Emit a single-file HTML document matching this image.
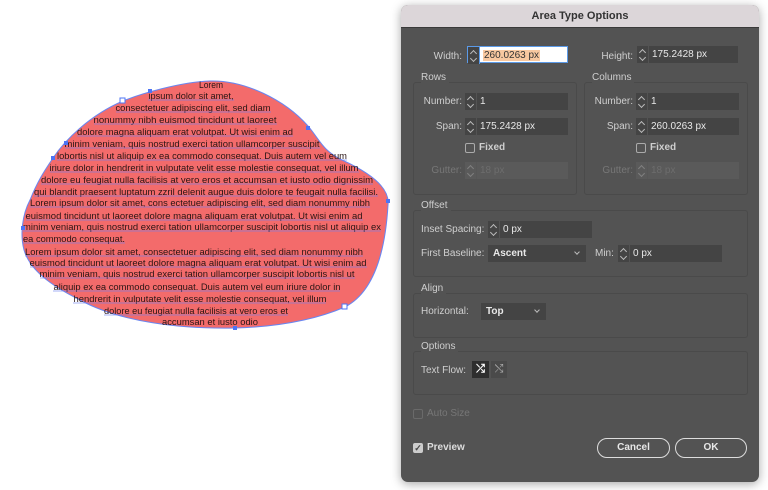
<!DOCTYPE html>
<html><head><meta charset="utf-8"><style>
*{margin:0;padding:0;box-sizing:border-box}
body{width:768px;height:490px;background:#fff;position:relative;overflow:hidden;font-family:"Liberation Sans",sans-serif}
.dlg{position:absolute;left:401px;top:5px;width:358px;height:477px;background:#535353;border-radius:7px;box-shadow:0 2px 10px rgba(0,0,0,.35);overflow:hidden}
.tb{position:absolute;left:0;top:0;width:358px;height:23px;background:#dcd6d9;border-bottom:1px solid #3a3a3a;text-align:center;font-weight:bold;font-size:11px;color:#333;line-height:23px}
.a{position:absolute}
.l{position:absolute;font-size:10px;color:#cfcfcf;white-space:nowrap;line-height:12px}
.dis{color:#777}
.f{position:absolute;height:17px;background:#444;font-size:10px;color:#e8e8e8;line-height:17px;padding-left:15px}
.f .sp{position:absolute;left:0;top:0;width:12px;height:17px;border-right:1px solid #535353;}
.f .sp:before{content:"";position:absolute;left:3px;top:4px;width:4px;height:4px;border-left:1px solid #bbb;border-top:1px solid #bbb;transform:rotate(45deg)}
.f .sp:after{content:"";position:absolute;left:3px;top:9px;width:4px;height:4px;border-right:1px solid #bbb;border-bottom:1px solid #bbb;transform:rotate(45deg)}
.g{position:absolute;border:1px solid #4a4a4a;border-radius:3px}
.dd{position:absolute;height:17px;background:#444;font-size:10px;color:#e8e8e8;line-height:17px;padding-left:5px;font-weight:bold}
.dd:after{content:"";position:absolute;right:7px;top:5px;width:3px;height:3px;border-right:1px solid #bbb;border-bottom:1px solid #bbb;transform:rotate(45deg)}
.cb{position:absolute;width:10px;height:10px;border:1px solid #aaa;border-radius:2px}
.btn{position:absolute;height:20px;border:1.5px solid #ddd;border-radius:10px;color:#e8e8e8;font-size:10px;font-weight:bold;text-align:center;line-height:17px}
</style></head><body>
<svg class="a" style="left:0;top:0" width="400" height="340">
<path d="M210,81 C245,80 285,100 308,126 C320,140 322,150 342,160 C375,175 390,190 388,205 C386,240 378,290 345,307 C310,322 270,327 235,328 C180,329 120,322 80,300 C50,285 30,270 24,250 C20,235 22,215 30,200 C38,180 45,170 53,158 C65,140 90,115 123,101 C140,94 180,82 210,81 Z" fill="#f36b6b" stroke="#6a86f0" stroke-width="1"/>
<g fill="#2a1515" font-family="Liberation Sans,sans-serif" font-size="9" text-anchor="middle">
<text x="211" y="88" textLength="24" lengthAdjust="spacingAndGlyphs">Lorem</text>
<text x="191" y="99" textLength="85" lengthAdjust="spacingAndGlyphs">ipsum dolor sit amet,</text>
<text x="193" y="111" textLength="155" lengthAdjust="spacingAndGlyphs">consectetuer adipiscing elit, sed diam</text>
<text x="185" y="123" textLength="183" lengthAdjust="spacingAndGlyphs">nonummy nibh euismod tincidunt ut laoreet</text>
<text x="185" y="135" textLength="216" lengthAdjust="spacingAndGlyphs">dolore magna aliquam erat volutpat. Ut wisi enim ad</text>
<text x="192" y="147" textLength="255" lengthAdjust="spacingAndGlyphs">minim veniam, quis nostrud exerci tation ullamcorper suscipit</text>
<text x="202" y="159" textLength="290" lengthAdjust="spacingAndGlyphs">lobortis nisl ut aliquip ex ea commodo consequat. Duis autem vel eum</text>
<text x="204" y="171" textLength="309" lengthAdjust="spacingAndGlyphs">iriure dolor in hendrerit in vulputate velit esse molestie consequat, vel illum</text>
<text x="207" y="183" textLength="332" lengthAdjust="spacingAndGlyphs">dolore eu feugiat nulla facilisis at vero eros et accumsan et iusto odio dignissim</text>
<text x="206" y="195" textLength="344" lengthAdjust="spacingAndGlyphs">qui blandit praesent luptatum zzril delenit augue duis dolore te feugait nulla facilisi.</text>
<text x="200" y="206" textLength="340" lengthAdjust="spacingAndGlyphs">Lorem ipsum dolor sit amet, cons ectetuer adipiscing elit, sed diam nonummy nibh</text>
<text x="194" y="219" textLength="337" lengthAdjust="spacingAndGlyphs">euismod tincidunt ut laoreet dolore magna aliquam erat volutpat. Ut wisi enim ad</text>
<text x="202" y="230" textLength="358" lengthAdjust="spacingAndGlyphs">minim veniam, quis nostrud exerci tation ullamcorper suscipit lobortis nisl ut aliquip ex</text>
<text x="23" y="242" text-anchor="start" textLength="102" lengthAdjust="spacingAndGlyphs">ea commodo consequat.</text>
<text x="194" y="255" textLength="338" lengthAdjust="spacingAndGlyphs">Lorem ipsum dolor sit amet, consectetuer adipiscing elit, sed diam nonummy nibh</text>
<text x="198" y="266" textLength="337" lengthAdjust="spacingAndGlyphs">euismod tincidunt ut laoreet dolore magna aliquam erat volutpat. Ut wisi enim ad</text>
<text x="197" y="277" textLength="315" lengthAdjust="spacingAndGlyphs">minim veniam, quis nostrud exerci tation ullamcorper suscipit lobortis nisl ut</text>
<text x="197" y="290" textLength="287" lengthAdjust="spacingAndGlyphs">aliquip ex ea commodo consequat. Duis autem vel eum iriure dolor in</text>
<text x="200" y="302" textLength="253" lengthAdjust="spacingAndGlyphs">hendrerit in vulputate velit esse molestie consequat, vel illum</text>
<text x="196" y="314" textLength="184" lengthAdjust="spacingAndGlyphs">dolore eu feugiat nulla facilisis at vero eros et</text>
<text x="210" y="325" textLength="96" lengthAdjust="spacingAndGlyphs">accumsan et iusto odio</text>
</g>
<g stroke="#6a7ff0" stroke-width="0.8" opacity="0.8">
<line x1="148" y1="100" x2="234" y2="100"/><line x1="116" y1="112" x2="271" y2="112"/><line x1="94" y1="124" x2="277" y2="124"/><line x1="77" y1="136" x2="293" y2="136"/><line x1="65" y1="148" x2="320" y2="148"/><line x1="57" y1="160" x2="347" y2="160"/><line x1="50" y1="172" x2="359" y2="172"/><line x1="41" y1="184" x2="373" y2="184"/><line x1="34" y1="196" x2="378" y2="196"/><line x1="30" y1="207" x2="370" y2="207"/><line x1="26" y1="220" x2="363" y2="220"/><line x1="23" y1="231" x2="381" y2="231"/><line x1="23" y1="243" x2="125" y2="243"/><line x1="25" y1="256" x2="363" y2="256"/><line x1="30" y1="267" x2="367" y2="267"/><line x1="40" y1="278" x2="355" y2="278"/><line x1="53" y1="291" x2="340" y2="291"/><line x1="73" y1="303" x2="326" y2="303"/><line x1="104" y1="315" x2="288" y2="315"/>
</g>
<g fill="#4d74f5"><rect x="148" y="89" width="4" height="4"/><rect x="306" y="126" width="4" height="4"/><rect x="386" y="199" width="4" height="4"/><rect x="51" y="156" width="4" height="4"/><rect x="64" y="141" width="4" height="4"/><rect x="21" y="226" width="4" height="4"/><rect x="233" y="326" width="4" height="4"/></g>
<g fill="#fff" stroke="#4d74f5"><rect x="120" y="98" width="5" height="5"/><rect x="342" y="304" width="5" height="5"/></g>
</svg>
<div class="dlg">
<div class="tb">Area Type Options</div>
<div class="l" style="right:297px;top:46px">Width:</div>
<div class="f" style="left:66px;top:41px;width:101px;border:1px solid #5b9ae8;background:#fff;color:#333"><span class="sp" style="border-color:#5b9ae8;background:#444"></span><span style="background:#f8c8a0;padding:0 1px">260.0263 px</span></div>
<div class="l" style="right:126px;top:46px">Height:</div>
<div class="f" style="left:236px;top:41px;width:101px"><span class="sp"></span>175.2428 px</div>
<div class="g" style="left:12px;top:77px;width:164px;height:113px"></div>
<div class="g" style="left:183px;top:77px;width:164px;height:113px"></div>
<div class="l" style="left:20px;top:67px;background:#535353;padding-right:3px">Rows</div>
<div class="l" style="left:191px;top:67px;background:#535353;padding-right:3px">Columns</div>
<div class="l" style="right:297px;top:91px">Number:</div>
<div class="f" style="left:64px;top:88px;width:103px"><span class="sp"></span>1</div>
<div class="l" style="right:126px;top:91px">Number:</div>
<div class="f" style="left:235px;top:88px;width:103px"><span class="sp"></span>1</div>
<div class="l" style="right:297px;top:116px">Span:</div>
<div class="f" style="left:64px;top:113px;width:103px"><span class="sp"></span>175.2428 px</div>
<div class="l" style="right:126px;top:116px">Span:</div>
<div class="f" style="left:235px;top:113px;width:103px"><span class="sp"></span>260.0263 px</div>
<div class="cb" style="left:64px;top:138px"></div><div class="l" style="left:78px;top:137px;font-weight:bold">Fixed</div>
<div class="cb" style="left:235px;top:138px"></div><div class="l" style="left:249px;top:137px;font-weight:bold">Fixed</div>
<div class="l dis" style="right:297px;top:160px">Gutter:</div>
<div class="f" style="left:64px;top:157px;width:103px;background:#5a5a5a;color:#6d6d6d"><span class="sp" style="opacity:.4"></span>18 px</div>
<div class="l dis" style="right:126px;top:160px">Gutter:</div>
<div class="f" style="left:235px;top:157px;width:103px;background:#5a5a5a;color:#6d6d6d"><span class="sp" style="opacity:.4"></span>18 px</div>
<div class="g" style="left:12px;top:205px;width:335px;height:67px"></div>
<div class="l" style="left:20px;top:195px;background:#535353;padding-right:3px">Offset</div>
<div class="l" style="left:20px;top:219px">Inset Spacing:</div>
<div class="f" style="left:87px;top:216px;width:104px"><span class="sp"></span>0 px</div>
<div class="l" style="left:20px;top:243px">First Baseline:</div>
<div class="dd" style="left:87px;top:240px;width:98px">Ascent</div>
<div class="l" style="left:194px;top:243px">Min:</div>
<div class="f" style="left:217px;top:240px;width:104px"><span class="sp"></span>0 px</div>
<div class="g" style="left:12px;top:288px;width:335px;height:45px"></div>
<div class="l" style="left:20px;top:278px;background:#535353;padding-right:3px">Align</div>
<div class="l" style="left:20px;top:301px">Horizontal:</div>
<div class="dd" style="left:80px;top:298px;width:65px">Top</div>
<div class="g" style="left:12px;top:346px;width:335px;height:44px"></div>
<div class="l" style="left:20px;top:336px;background:#535353;padding-right:3px">Options</div>
<div class="l" style="left:20px;top:360px">Text Flow:</div>
<div class="a" style="left:71px;top:356px;width:17px;height:17px;background:#2e2e2e;color:#fff;font-size:11px;text-align:center;line-height:17px;font-weight:bold">⤮</div>
<div class="a" style="left:90px;top:356px;width:16px;height:17px;background:#4a4a4a;color:#aaa;font-size:11px;text-align:center;line-height:17px">⤭</div>
<div class="cb" style="left:12px;top:404px;border-color:#6a6a6a"></div><div class="l dis" style="left:26px;top:403px">Auto Size</div>
<div class="cb" style="left:12px;top:438px;background:#ccc;border-color:#ccc;color:#444;font-size:9px;line-height:8px;text-align:center;font-weight:bold">✓</div>
<div class="l" style="left:26px;top:437px;font-weight:bold;color:#ddd">Preview</div>
<div class="btn" style="left:196px;top:433px;width:73px">Cancel</div>
<div class="btn" style="left:274px;top:433px;width:72px">OK</div>
</div>
</body></html>
